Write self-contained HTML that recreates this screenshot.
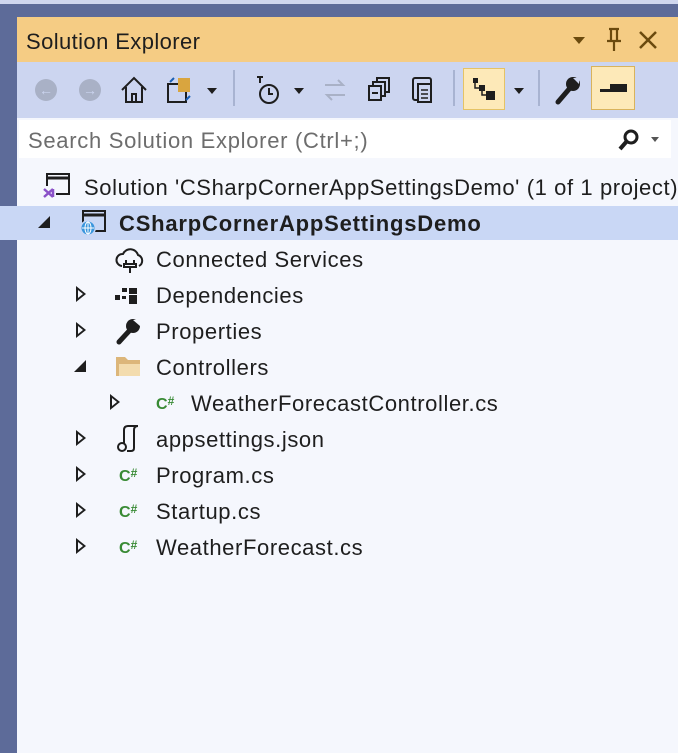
<!DOCTYPE html>
<html><head><style>
body{margin:0;width:678px;height:753px;background:#5d6b99;position:relative;overflow:hidden;font-family:"Liberation Sans","DejaVu Sans",sans-serif;}
.top{position:absolute;left:0;top:0;width:678px;height:4px;background:#cfd6ee}
.panel{position:absolute;left:17px;top:17px;width:661px;height:736px;background:#f5f7fd}
.title{position:absolute;left:0;top:0;width:661px;height:45px;background:#f5cc84;color:#1e1e1e;font-size:22px;letter-spacing:0.4px;line-height:49px;padding-left:9px;box-sizing:border-box}
.tb{position:absolute;left:0;top:45px;width:661px;height:56px;background:#ccd5f0}
.search{position:absolute;left:2px;top:103px;width:652px;height:38px;background:#fff;color:#6d6d6d;font-size:22px;letter-spacing:0.7px;line-height:42px;padding-left:9px;box-sizing:border-box}
.row{position:absolute;height:36px;line-height:38px;font-size:22px;letter-spacing:0.6px;color:#1e1e1e;white-space:nowrap}
.sel{position:absolute;left:0;top:206px;width:678px;height:34px;background:#c9d7f5}
.cs{color:#388a34;font-weight:bold;font-size:16px;position:absolute}
.cs sup{font-size:12px;vertical-align:4px}
.tri{position:absolute;width:0;height:0}
.sep{position:absolute;top:8px;width:2px;height:36px;background:#a8b3d1}
.ic{position:absolute}
</style></head><body>
<div class="top"></div>
<div class="panel">
<div class="title">Solution Explorer
 <span style="position:absolute;left:556px;top:20px;border-left:6px solid transparent;border-right:6px solid transparent;border-top:7px solid #6b4a0e"></span>
 <svg style="position:absolute;left:588px;top:10px" width="18" height="26"><path d="M4 2 H14 M6 2 V14 M12 2 V14 M2 14 H16 M9 14 V24" stroke="#6b4a0e" stroke-width="2.2" fill="none"/></svg>
 <svg style="position:absolute;left:620px;top:12px" width="22" height="22"><path d="M3 3 L19 19 M19 3 L3 19" stroke="#6b4a0e" stroke-width="2.5"/></svg>
</div>
<div class="tb">
 <div class="ic" style="left:18px;top:17px;width:22px;height:22px;border-radius:50%;background:#a9b1c6;color:#ccd5f0;font-size:14px;line-height:22px;text-align:center">←</div>
 <div class="ic" style="left:62px;top:17px;width:22px;height:22px;border-radius:50%;background:#a9b1c6;color:#ccd5f0;font-size:14px;line-height:22px;text-align:center">→</div>
 <svg class="ic" style="left:102px;top:13px" width="30" height="30"><path d="M3 15 L15 3 L27 15 M7 12 V27 H23 V12 M13 27 V19 H17 V27" fill="none" stroke="#1e1e1e" stroke-width="2"/></svg>
 <svg class="ic" style="left:148px;top:12px" width="34" height="32"><rect x="3" y="10" width="18" height="18" fill="none" stroke="#1e1e1e" stroke-width="2"/><rect x="13" y="4" width="12" height="14" fill="#d9a53f"/><path d="M5 8 L9 4 M25 22 L21 26" stroke="#1a5fb4" stroke-width="2"/></svg>
 <div class="tri" style="left:190px;top:26px;border-left:5px solid transparent;border-right:5px solid transparent;border-top:6px solid #1e1e1e"></div>
 <div class="sep" style="left:216px"></div>
 <svg class="ic" style="left:236px;top:11px" width="30" height="34"><path d="M4 4 H10 M7 4 V10" stroke="#1e1e1e" stroke-width="2"/><circle cx="16" cy="21" r="9" fill="none" stroke="#1e1e1e" stroke-width="2"/><path d="M16 15 V21 H20" fill="none" stroke="#1e1e1e" stroke-width="2"/></svg>
 <div class="tri" style="left:277px;top:26px;border-left:5px solid transparent;border-right:5px solid transparent;border-top:6px solid #1e1e1e"></div>
 <svg class="ic" style="left:304px;top:14px" width="28" height="28"><path d="M4 9 H22 L17 4 M24 19 H6 L11 24" fill="none" stroke="#a9b1c6" stroke-width="2"/></svg>
 <svg class="ic" style="left:350px;top:14px" width="26" height="28"><rect x="2" y="10" width="12" height="14" fill="none" stroke="#1e1e1e" stroke-width="2"/><path d="M6 10 V6 H18 V20 H14 M10 6 V2 H22 V16 H18" fill="none" stroke="#1e1e1e" stroke-width="2"/><path d="M5 17 H11" stroke="#1e1e1e" stroke-width="2"/></svg>
 <svg class="ic" style="left:392px;top:12px" width="28" height="32"><rect x="4" y="4" width="18" height="22" rx="2" fill="none" stroke="#1e1e1e" stroke-width="2"/><rect x="9" y="10" width="13" height="18" fill="#ccd5f0" stroke="#1e1e1e" stroke-width="2"/><path d="M12 16 H19 M12 20 H19 M12 24 H19" stroke="#1e1e1e" stroke-width="1.5"/></svg>
 <div class="sep" style="left:436px"></div>
 <div class="ic" style="left:446px;top:6px;width:42px;height:42px;background:#fde9b8;border:1px solid #e5c365;box-sizing:border-box"></div>
 <svg class="ic" style="left:455px;top:15px" width="26" height="26"><rect x="1" y="1" width="5" height="5" fill="#1e1e1e"/><rect x="7" y="8" width="6" height="6" fill="#1e1e1e"/><rect x="14" y="14" width="9" height="9" fill="#1e1e1e"/><path d="M3 6 V11 H7 M10 14 V18 H14" stroke="#1e1e1e" stroke-width="1.5" fill="none"/></svg>
 <div class="tri" style="left:497px;top:26px;border-left:5px solid transparent;border-right:5px solid transparent;border-top:6px solid #1e1e1e"></div>
 <div class="sep" style="left:521px"></div>
 <svg class="ic" style="left:536px;top:12px" width="30" height="32"><path d="M5 28 L17 14" stroke="#1e1e1e" stroke-width="5" stroke-linecap="round"/><circle cx="20" cy="10" r="7" fill="#1e1e1e"/><path d="M20 4 L26 4 L26 10 Z" fill="#ccd5f0"/></svg>
 <div class="ic" style="left:574px;top:4px;width:44px;height:44px;background:#fde9b8;border:1px solid #d9b35c;box-sizing:border-box"></div>
 <div class="ic" style="left:583px;top:27px;width:10px;height:3px;background:#1e1e1e"></div>
 <div class="ic" style="left:593px;top:22px;width:17px;height:8px;background:#1e1e1e"></div>
</div>
<div class="search">Search Solution Explorer (Ctrl+;)
 <svg style="position:absolute;left:598px;top:8px" width="24" height="24"><circle cx="14" cy="9" r="6" fill="none" stroke="#1e1e1e" stroke-width="3"/><path d="M10 13 L3 21" stroke="#1e1e1e" stroke-width="4"/></svg>
 <span style="position:absolute;left:632px;top:17px;border-left:4px solid transparent;border-right:4px solid transparent;border-top:5px solid #555"></span>
</div>
</div>
<div class="sel"></div>
<svg style="position:absolute;left:42px;top:172px" width="30" height="28"><rect x="5" y="2" width="22" height="20" fill="none" stroke="#1e1e1e" stroke-width="2"/><path d="M5 6 H27" stroke="#1e1e1e" stroke-width="3"/><rect x="0" y="14" width="14" height="13" fill="#f5f7fd"/><path d="M2 17 L11 25 M2 25 L11 17 M11 17 V25" stroke="#8b52c8" stroke-width="2.5"/></svg>
<div class="row" style="left:84px;top:169px">Solution 'CSharpCornerAppSettingsDemo' (1 of 1 project)</div>
<div class="tri" style="left:38px;top:216px;border-left:12px solid transparent;border-bottom:12px solid #1e1e1e"></div>
<svg style="position:absolute;left:78px;top:209px" width="30" height="28"><rect x="5" y="2" width="22" height="20" fill="none" stroke="#1e1e1e" stroke-width="2"/><path d="M5 6 H27" stroke="#1e1e1e" stroke-width="3"/><circle cx="10" cy="19" r="8" fill="#c9d7f5"/><circle cx="10" cy="19" r="6.5" fill="#3a96dd"/><path d="M4 19 H16 M10 13 V25" stroke="#fff" stroke-width="1"/><ellipse cx="10" cy="19" rx="3" ry="6" fill="none" stroke="#fff" stroke-width="1"/></svg>
<div class="row" style="left:119px;top:205px;font-weight:bold;letter-spacing:0.8px">CSharpCornerAppSettingsDemo</div>
<svg style="position:absolute;left:114px;top:248px" width="32" height="26"><path d="M8 18 A6 6 0 0 1 9 6 A8 8 0 0 1 24 7 A6 6 0 0 1 25 18" fill="none" stroke="#1e1e1e" stroke-width="2"/><path d="M12 12 V16 M20 12 V16 M10 16 H22 V19 H10 Z M16 19 V25" stroke="#1e1e1e" stroke-width="2" fill="none"/></svg>
<div class="row" style="left:156px;top:241px">Connected Services</div>
<div class="tri" style="left:76px;top:286px;border-top:8px solid transparent;border-bottom:8px solid transparent;border-left:10px solid #1e1e1e"></div>
<div class="tri" style="left:78px;top:290px;border-top:4px solid transparent;border-bottom:4px solid transparent;border-left:5px solid #f5f7fd"></div>
<svg style="position:absolute;left:114px;top:284px" width="30" height="24"><rect x="1" y="11" width="5" height="5" fill="#1e1e1e"/><rect x="8" y="4" width="5" height="4" fill="#1e1e1e"/><rect x="8" y="12" width="4" height="3" fill="#1e1e1e"/><rect x="15" y="4" width="8" height="6" fill="#1e1e1e"/><rect x="15" y="11" width="8" height="9" fill="#1e1e1e"/></svg>
<div class="row" style="left:156px;top:277px">Dependencies</div>
<div class="tri" style="left:76px;top:322px;border-top:8px solid transparent;border-bottom:8px solid transparent;border-left:10px solid #1e1e1e"></div>
<div class="tri" style="left:78px;top:326px;border-top:4px solid transparent;border-bottom:4px solid transparent;border-left:5px solid #f5f7fd"></div>
<svg style="position:absolute;left:114px;top:316px" width="30" height="30"><path d="M5 26 L16 14" stroke="#1e1e1e" stroke-width="5" stroke-linecap="round"/><circle cx="19" cy="10" r="7" fill="#1e1e1e"/><path d="M19 4 L26 3 L26 10 Z" fill="#f5f7fd"/></svg>
<div class="row" style="left:156px;top:313px">Properties</div>
<div class="tri" style="left:74px;top:360px;border-left:12px solid transparent;border-bottom:12px solid #1e1e1e"></div>
<svg style="position:absolute;left:114px;top:353px" width="30" height="26"><path d="M2 4 H11 L14 7 H26 V23 H2 Z" fill="#dcb67a"/><path d="M5 11 H26 V23 H5 Z" fill="#f3dcae"/></svg>
<div class="row" style="left:156px;top:349px">Controllers</div>
<div class="tri" style="left:110px;top:394px;border-top:8px solid transparent;border-bottom:8px solid transparent;border-left:10px solid #1e1e1e"></div>
<div class="tri" style="left:112px;top:398px;border-top:4px solid transparent;border-bottom:4px solid transparent;border-left:5px solid #f5f7fd"></div>
<span class="cs" style="left:156px;top:394px">C<sup>#</sup></span>
<div class="row" style="left:191px;top:385px">WeatherForecastController.cs</div>
<div class="tri" style="left:76px;top:430px;border-top:8px solid transparent;border-bottom:8px solid transparent;border-left:10px solid #1e1e1e"></div>
<div class="tri" style="left:78px;top:434px;border-top:4px solid transparent;border-bottom:4px solid transparent;border-left:5px solid #f5f7fd"></div>
<svg style="position:absolute;left:114px;top:424px" width="30" height="30"><path d="M10 24 V6 Q10 2 14 2 H24 Q20 2 20 6 V24 Q20 27 17 27 H13" fill="none" stroke="#1e1e1e" stroke-width="2"/><circle cx="8" cy="23" r="4" fill="#f5f7fd" stroke="#1e1e1e" stroke-width="2"/></svg>
<div class="row" style="left:156px;top:421px">appsettings.json</div>
<div class="tri" style="left:76px;top:466px;border-top:8px solid transparent;border-bottom:8px solid transparent;border-left:10px solid #1e1e1e"></div>
<div class="tri" style="left:78px;top:470px;border-top:4px solid transparent;border-bottom:4px solid transparent;border-left:5px solid #f5f7fd"></div>
<span class="cs" style="left:119px;top:466px">C<sup>#</sup></span>
<div class="row" style="left:156px;top:457px">Program.cs</div>
<div class="tri" style="left:76px;top:502px;border-top:8px solid transparent;border-bottom:8px solid transparent;border-left:10px solid #1e1e1e"></div>
<div class="tri" style="left:78px;top:506px;border-top:4px solid transparent;border-bottom:4px solid transparent;border-left:5px solid #f5f7fd"></div>
<span class="cs" style="left:119px;top:502px">C<sup>#</sup></span>
<div class="row" style="left:156px;top:493px">Startup.cs</div>
<div class="tri" style="left:76px;top:538px;border-top:8px solid transparent;border-bottom:8px solid transparent;border-left:10px solid #1e1e1e"></div>
<div class="tri" style="left:78px;top:542px;border-top:4px solid transparent;border-bottom:4px solid transparent;border-left:5px solid #f5f7fd"></div>
<span class="cs" style="left:119px;top:538px">C<sup>#</sup></span>
<div class="row" style="left:156px;top:529px">WeatherForecast.cs</div>
</body></html>
